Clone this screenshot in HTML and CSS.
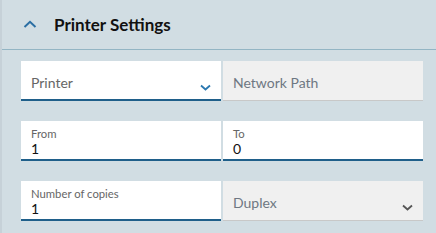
FILE: index.html
```html
<!DOCTYPE html>
<html>
<head>
<meta charset="utf-8">
<link rel="stylesheet" href="styles.css">
</head>
<body>
<div class="panel">
  <div class="header">
    <svg class="chev-up" width="14" height="8" viewBox="0 0 14 8"><path d="M1.5 7 L7 1.8 L12.5 7" fill="none" stroke="#2a6ea3" stroke-width="2"/></svg>
    <span class="title">Printer Settings</span>
  </div>
  <div class="grid">
    <div class="field select">
      <span class="ph">Printer</span>
      <svg class="chev" width="11" height="7" viewBox="0 0 11 7"><path d="M1 1.5 L5.5 5.5 L10 1.5" fill="none" stroke="#2b78b0" stroke-width="1.8"/></svg>
    </div>
    <div class="field disabled">
      <span class="ph dis">Network Path</span>
    </div>
    <div class="field input">
      <span class="label">From</span>
      <span class="value">1</span>
    </div>
    <div class="field input">
      <span class="label">To</span>
      <span class="value">0</span>
    </div>
    <div class="field input">
      <span class="label">Number of copies</span>
      <span class="value">1</span>
    </div>
    <div class="field disabled select">
      <span class="ph dis">Duplex</span>
      <svg class="chev" width="11" height="7" viewBox="0 0 11 7"><path d="M1 1.5 L5.5 5.5 L10 1.5" fill="none" stroke="#555" stroke-width="1.8"/></svg>
    </div>
  </div>
</div>
</body>
</html>
```
FILE: styles.css
```css
html, body {
  margin: 0;
  padding: 0;
  background: #d1dde3;
  font-family: Lato, "Liberation Sans", sans-serif;
}
.panel {
  width: 436px;
  height: 233px;
  box-sizing: border-box;
  border-left: 2px solid #c6d1d8;
}
.header {
  height: 49px;
  border-bottom: 1px solid #93b5c4;
  display: flex;
  align-items: center;
  padding-left: 21px;
  box-sizing: content-box;
}
.chev-up {
  display: block;
  margin-top: -2px;
}
.title {
  margin-left: 17px;
  font-size: 17px;
  font-weight: 700;
  color: #111;
  margin-top: -1px;
}
.grid {
  display: grid;
  grid-template-columns: 200px 200px;
  grid-auto-rows: 40px;
  column-gap: 2px;
  row-gap: 20px;
  padding: 11px 0 0 19px;
}
.field {
  background: #fff;
  box-sizing: border-box;
  border-bottom: 2px solid #1f5f8a;
  padding-left: 10px;
  position: relative;
  display: flex;
  flex-direction: column;
}
.field.disabled {
  background: #f0f0f0;
  border-bottom: 1px solid #c8c8c8;
}
.ph {
  font-size: 14px;
  color: #666;
  margin-top: 13px;
}
.ph.dis {
  color: #6e7782;
}
.chev {
  position: absolute;
  right: 10px;
  top: 23px;
}
.label {
  font-size: 11.3px;
  color: #666;
  margin-top: 6px;
  line-height: 14px;
}
.value {
  font-size: 14px;
  color: #111;
  line-height: 17px;
  margin-top: -1px;
}
```
